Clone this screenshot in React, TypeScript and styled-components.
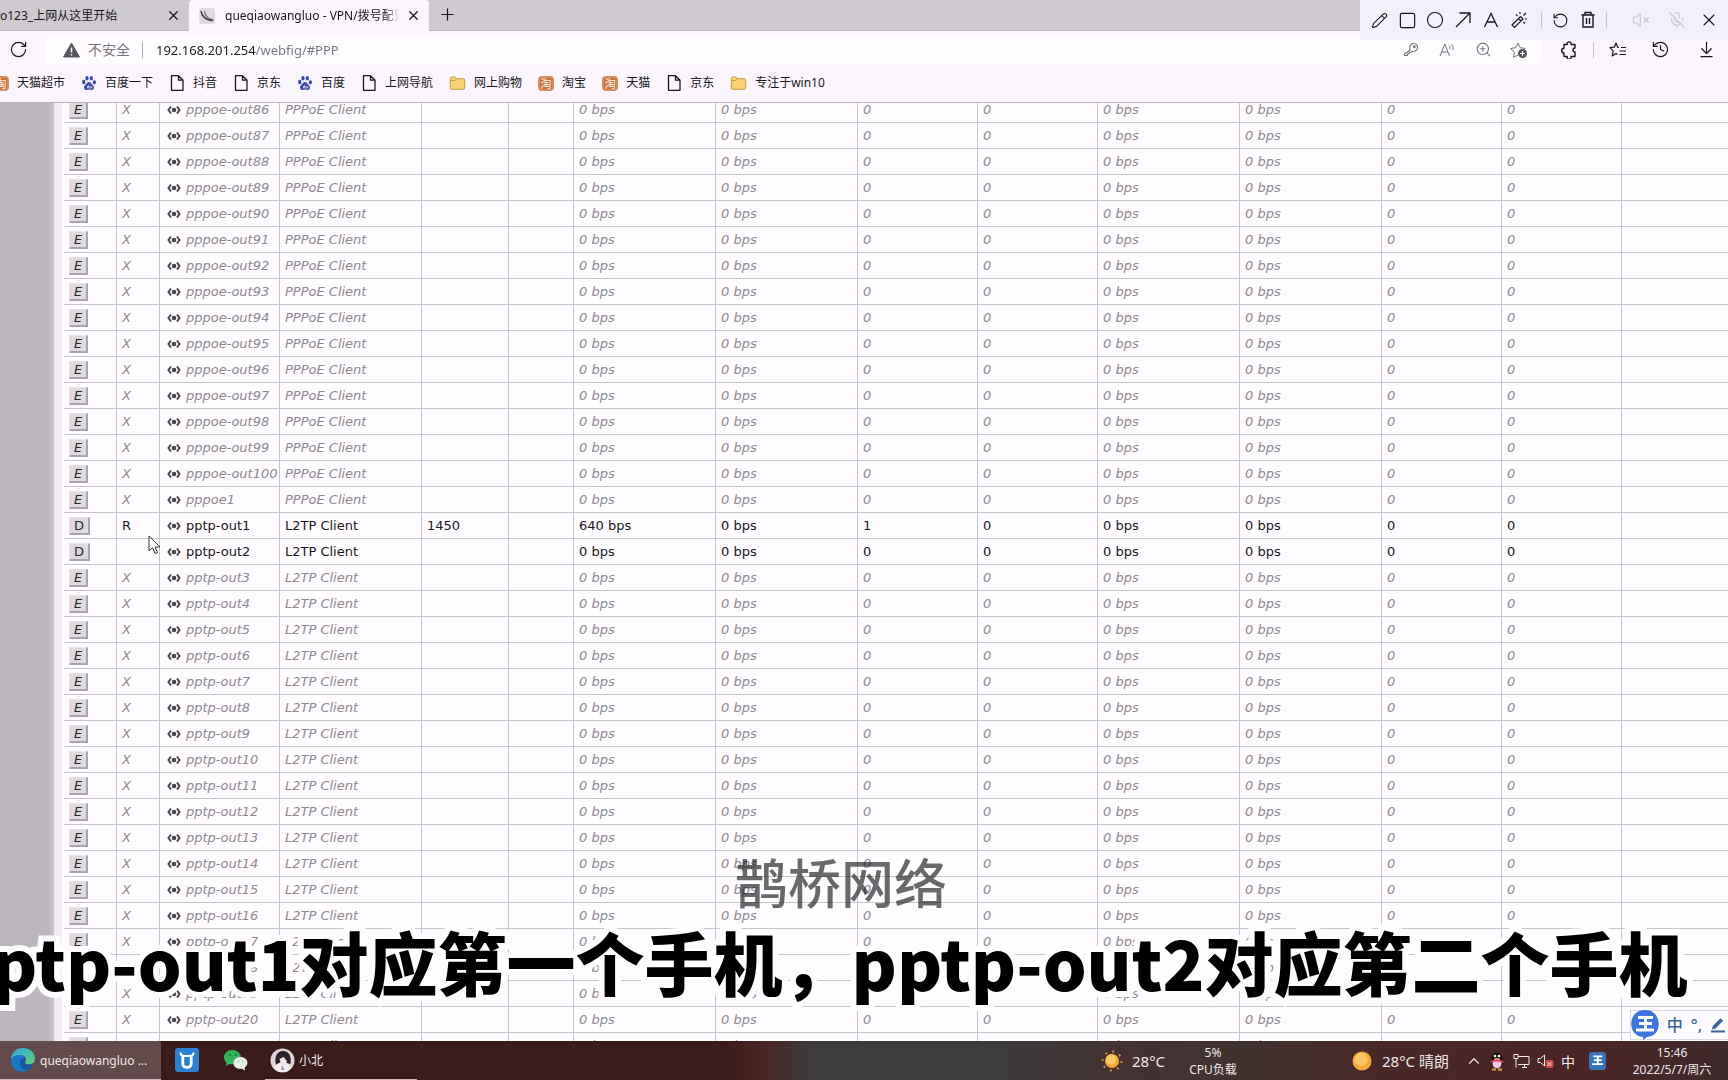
import React from 'react';
import styled, { createGlobalStyle, css } from 'styled-components';
import {
  Pencil, Square, Circle, RotateCcw, Trash2, VolumeX, MicOff, X, Plus, RotateCw,
  ZoomIn, History, ArrowDownToLine, ChevronUp,
} from 'lucide-react';

const Global = createGlobalStyle`
  * { box-sizing: border-box; }
  html, body, #root { height: 100%; }
  body {
    margin: 0;
    overflow: hidden;
    color: #19171b;
    font-family: "Noto Sans", "Noto Sans CJK SC", sans-serif;
    font-size: 12px;
  }
  button { font: inherit; color: inherit; padding: 0; border: 0; background: none; }
  a { color: inherit; text-decoration: none; }
`;

const Screen = styled.div`
  position: relative;
  display: flex;
  flex-direction: column;
  height: 100vh;
  overflow: hidden;
  background: #fefcff;
`;

/* ---------- browser chrome ---------- */

const TabStrip = styled.div`
  display: flex;
  flex: none;
  height: 31px;
  background: #cfcacf;
  border-bottom: 1px solid #bdb8bf;
`;

const Tab = styled.div<{ $active?: boolean }>`
  display: flex;
  align-items: center;
  height: 31px;
  width: ${p => (p.$active ? 240 : 189)}px;
  padding: 0 8px 0 ${p => (p.$active ? 10 : 0)}px;
  border-radius: 4px 4px 0 0;
  background: ${p => (p.$active ? '#fbf5fd' : 'transparent')};
`;

const TabTitle = styled.span<{ $fade?: boolean }>`
  flex: 1;
  min-width: 0;
  margin-right: 6px;
  overflow: hidden;
  white-space: nowrap;
  line-height: 20px;
  ${p => p.$fade && css`mask-image: linear-gradient(90deg, #000 92%, transparent);`}
`;

const IconButton = styled.button<{ $w?: number; $tone?: string }>`
  display: flex;
  flex: none;
  align-items: center;
  justify-content: center;
  width: ${p => p.$w ?? 16}px;
  height: 28px;
  color: ${p => p.$tone ?? '#19171b'};
`;

const Favicon = styled.span`
  display: flex;
  flex: none;
  width: 16px;
  height: 16px;
  margin-right: 10px;
`;

const Toolbar = styled.div`
  display: flex;
  flex: none;
  align-items: center;
  height: 37px;
  padding-right: 8px;
  background: #fbf5fd;
`;

const AddressBar = styled.label`
  display: flex;
  flex: 1;
  align-items: center;
  height: 30px;
  margin-left: 10px;
  padding: 0 12px 0 17px;
  border-radius: 3px;
  background: #fefcff;
  color: #77737a;
  font-size: 14px;
`;

const Insecure = styled.span`
  padding: 0 12px 0 8px;
  margin-right: 13px;
  border-right: 1px solid #b5b0b8;
  line-height: 16px;
  white-space: nowrap;
`;

const AddressInput = styled.input`
  flex: 1;
  min-width: 0;
  height: 24px;
  padding: 0;
  border: 0;
  outline: 0;
  font: inherit;
  font-size: 13px;
  background: linear-gradient(90deg, #1d1b1f 100px, #77737a 100px);
  background-clip: text;
  -webkit-text-fill-color: transparent;
`;

const ToolGroup = styled.div<{ $gap: number; $end?: number }>`
  display: flex;
  flex: none;
  align-items: center;
  gap: ${p => p.$gap}px;
  padding-right: ${p => p.$end ?? 0}px;
`;

const Divider = styled.span`
  width: 1px;
  height: 16px;
  background: #c6c0cb;
`;

const BookmarkRow = styled.div`
  flex: none;
  background: #fbf5fd;
  border-bottom: 1px solid #b9b4bb;
`;

const Bookmarks = styled.nav`
  display: flex;
  align-items: center;
  gap: 16px;
  height: 34px;
  margin-left: -7px;
  padding-bottom: 4px;
  line-height: 16px;
  white-space: nowrap;
`;

const Bookmark = styled.a`
  display: flex;
  align-items: center;
  gap: 8px;
`;

const TaoBadge = styled.span`
  display: grid;
  place-items: center;
  width: 16px;
  height: 15px;
  border: 2px solid #d98a5c;
  border-radius: 4px;
  background: #c9713f;
  color: #fff3ea;
  font-size: 11px;
  line-height: 11px;
`;

/* ---------- interface list ---------- */

const Page = styled.main`
  display: flex;
  flex: 1;
  min-height: 0;
  overflow: hidden;
`;

const Gutter = styled.div`
  flex: none;
  width: 64px;
  background: linear-gradient(90deg, #bcb7bd 48px, #c8c3ca 54px, #efeaf2 54px, #f3eef6 62px, #fefcff 62px);
`;

const Table = styled.table`
  flex: 1;
  align-self: flex-start;
  width: 100%;
  margin-top: -6px;
  table-layout: fixed;
  border-collapse: separate;
  border-spacing: 0;
  font-family: "DejaVu Sans", sans-serif;
  font-size: 13px;
`;

const Col = styled.col<{ $w?: number }>`
  ${p => p.$w && css`width: ${p.$w}px;`}
`;

const Row = styled.tr<{ $off: boolean }>`
  color: ${p => (p.$off ? '#8e898f' : '#19171b')};
  font-style: ${p => (p.$off ? 'italic' : 'normal')};
`;

const Cell = styled.td`
  height: 26px;
  padding: 0 0 0 5px;
  border: solid #c9c4cb;
  border-width: 0 1px 1px 0;
  line-height: 16px;
  white-space: nowrap;
  overflow: hidden;
  &:last-child { border-right: 0; }
`;

const Toggle = styled.button`
  display: block;
  height: 18px;
  padding: 0 4px;
  border: 1px solid #e6e2e8;
  border-right: 2px solid #a9a4ac;
  border-bottom: 2px solid #a9a4ac;
  background: #dedae0;
  color: #2a272c;
  font-style: inherit;
  line-height: 15px;
`;

const Name = styled.span`
  display: flex;
  align-items: center;
  gap: 5px;
  padding-left: 2px;
`;

type Iface = { name: string; type: string; flag: string; mtu?: string; tx?: string; pkt?: string };

const rows: Iface[] = [
  ...Array.from({ length: 15 }, (_, i) => ({ name: `pppoe-out${86 + i}`, type: 'PPPoE Client', flag: 'X' })),
  { name: 'pppoe1', type: 'PPPoE Client', flag: 'X' },
  { name: 'pptp-out1', type: 'L2TP Client', flag: 'R', mtu: '1450', tx: '640 bps', pkt: '1' },
  { name: 'pptp-out2', type: 'L2TP Client', flag: '' },
  ...Array.from({ length: 19 }, (_, i) => ({ name: `pptp-out${3 + i}`, type: 'L2TP Client', flag: 'X' })),
];

const columns = [53, 43, 120, 142, 87, 65, 142, 142, 120, 120, 142, 142, 120, 120, undefined];

const LinkIcon = () => (
  <svg width="14" height="10" viewBox="0 0 14 10" fill="none" stroke="#4a464d" strokeWidth="2">
    <path d="M4 1.500 1.500 5 4 8.500M10 1.500 12.500 5 10 8.500" />
    <circle cx="7" cy="5" r="2.300" fill="#4a464d" stroke="none" />
  </svg>
);

/* ---------- overlays ---------- */

const MarkupBar = styled.div`
  position: absolute;
  top: 0;
  right: 0;
  display: flex;
  align-items: center;
  gap: 8px;
  height: 40px;
  padding: 0 9px;
  background: #f3effd;
`;

const Spacer = styled.span`
  width: 4px;
`;

const Pointer = styled.svg`
  position: absolute;
  left: 148px;
  top: 535px;
`;

const Watermark = styled.div`
  position: absolute;
  left: 735px;
  top: 853px;
  color: rgba(30, 27, 32, 0.66);
  font-family: "Noto Sans CJK SC", sans-serif;
  font-size: 53px;
  font-weight: 500;
  line-height: 56px;
  white-space: nowrap;
`;

const Caption = styled.div`
  position: absolute;
  left: -8px;
  top: 911px;
  color: #000;
  font-family: "Noto Sans CJK SC", sans-serif;
  font-size: 69px;
  font-weight: 900;
  line-height: 100px;
  white-space: nowrap;
  -webkit-text-stroke: 12px #fefcff;
  paint-order: stroke fill;
`;

const ImeBar = styled.div`
  position: absolute;
  right: 0;
  bottom: 40px;
  display: flex;
  align-items: center;
  gap: 8px;
  height: 30px;
  padding-right: 2px;
  border: 1px solid #dcd6e0;
  border-right: 0;
  background: #fefcff;
  color: #356496;
  font-size: 16px;
  font-weight: 500;
  line-height: 20px;
`;

/* ---------- taskbar ---------- */

const Taskbar = styled.footer`
  display: flex;
  flex: none;
  align-items: stretch;
  height: 39px;
  color: #f0e8ea;
  font-size: 14px;
  background: linear-gradient(90deg, #3a1c1a 0, #3c1c1a 42%, #4a2321 44%, #3d3b3c 47%, #3d3b3c 58%, #443131 65%, #40322f 72%, #4a2727 80%, #4b2526 92%, #402a2b 100%);
`;

const Task = styled.button<{ $w: number; $pad?: number; $active?: boolean; $line?: boolean }>`
  display: flex;
  align-items: center;
  gap: 4px;
  width: ${p => p.$w}px;
  padding-left: ${p => p.$pad ?? 5}px;
  white-space: nowrap;
  font-size: 12px;
  background: ${p => (p.$active ? '#644b4b' : 'transparent')};
  border-bottom: 1px solid ${p => (p.$line || p.$active ? '#cdb4b6' : 'transparent')};
`;

const Tray = styled.div`
  display: flex;
  align-items: center;
  margin-left: auto;
  padding-right: 14px;
`;

const TrayItem = styled.button<{ $w: number }>`
  display: flex;
  flex: none;
  align-items: center;
  gap: 9px;
  width: ${p => p.$w}px;
  white-space: nowrap;
`;

const Weather = styled(TrayItem)`
  font-size: 15px;
`;

const Stack = styled.div<{ $w: number }>`
  width: ${p => p.$w}px;
  font-size: 12px;
  line-height: 17px;
  text-align: center;
  white-space: nowrap;
`;

/* ---------- drawings ---------- */

const Paw = () => (
  <svg width="16" height="16" viewBox="0 0 16 16" fill="#3b49a8">
    <ellipse cx="2.800" cy="7" rx="1.700" ry="2.200" /><ellipse cx="6" cy="3.300" rx="1.600" ry="2.300" />
    <ellipse cx="10.300" cy="3.300" rx="1.600" ry="2.300" /><ellipse cx="13.400" cy="7.300" rx="1.600" ry="2.100" />
    <path d="M8 7c2 0 2.600 2 4 3.300 1.800 1.700 1 4.700-1.300 4.700-1 0-1.700-.4-2.700-.4s-1.700.4-2.700.4C3 15 2.200 12 4 10.300 5.400 9 6 7 8 7Z" />
    <path d="M6.500 11v2h1.200v-3M9 11v2h1.800v-2" stroke="#dfe2fa" strokeWidth=".8" fill="none" />
  </svg>
);

const Folder = () => (
  <svg width="17" height="16" viewBox="0 0 16 16">
    <path d="M.8 3.500C.8 2.600 1.300 2 2.100 2h3.500l1.700 1.700h6.500c.8 0 1.400.5 1.400 1.300v8c0 .8-.5 1.300-1.300 1.300H2.100C1.300 14.300.8 13.800.8 13Z" fill="#f8d272" stroke="#c59a48" />
    <path d="M1 5.500h4.300L7.200 4" fill="none" stroke="#c59a48" />
  </svg>
);

const Doc = () => (
  <svg width="16" height="16" viewBox="0 0 16 16" fill="none" stroke="#19171b" strokeWidth="1.300" strokeLinejoin="round">
    <path d="M2.500.7H9.500l4.500 4.500v10.100H2.500ZM9.500.7v4.500H14" />
  </svg>
);

const Tao = () => <TaoBadge>淘</TaoBadge>;

const bookmarks: [React.FC, string][] = [
  [Tao, '天猫超市'], [Paw, '百度一下'], [Doc, '抖音'], [Doc, '京东'], [Paw, '百度'], [Doc, '上网导航'],
  [Folder, '网上购物'], [Tao, '淘宝'], [Tao, '天猫'], [Doc, '京东'], [Folder, '专注于win10'],
];

const Warning = () => (
  <svg width="17" height="16" viewBox="0 0 17 16">
    <path d="M8.500 1 16.500 15H.5Z" fill="#5b575e" stroke="#5b575e" strokeLinejoin="round" />
    <path d="M8.500 5.500v5M8.500 12v1.500" stroke="#fefcff" strokeWidth="1.500" />
  </svg>
);

const KeyIcon = () => (
  <svg width="16" height="16" viewBox="0 0 16 16" fill="none" stroke="#77737a" strokeWidth="1.100" strokeLinejoin="round">
    <path d="M7 8.300C5.800 5 7.500 1.500 10.500 1.500c2.500 0 4 1.700 4 4 0 3-3 4.500-5.500 3.700L7.500 10.500H6V12H4.500v1.500H1.500V12Z" />
    <circle cx="11.300" cy="4.700" r=".9" />
  </svg>
);

const StarPlus = () => (
  <svg width="20" height="18" viewBox="0 0 20 18" fill="none" stroke="#77737a">
    <path d="M9 14l-4.500 2.400.9-5.200L1.500 7.500l5.200-.8L9 2l2.300 4.700 5.200.8" strokeLinejoin="round" />
    <circle cx="13.500" cy="12.500" r="4.500" fill="#57535a" stroke="none" />
    <path d="M11 12.500h5M13.500 10v5" stroke="#fefcff" />
  </svg>
);

const PuzzleIcon = () => (
  <svg width="18" height="18" viewBox="0 0 18 18" fill="none" stroke="#19171b" strokeWidth="1.400" strokeLinejoin="round">
    <path d="M4 3.500h3.200a2 2 0 1 1 3.800 0h4V7a2 2 0 1 0 0 4v4.500h-4a2 2 0 1 1-3.800 0H4V12A2.300 2.300 0 1 1 4 7.200Z" />
  </svg>
);

const StarList = () => (
  <svg width="18" height="18" viewBox="0 0 18 18" fill="none" stroke="#19171b" strokeWidth="1.200" strokeLinejoin="round">
    <path d="M10 6.500H8.800L7 2 5.300 6.200l-4.300.5 3.200 3.200-.9 5L7 12.500l1.500 1M12 6.500h5M10.500 10H17M10.500 13.500H17" />
  </svg>
);

const ReadAloud = () => (
  <svg width="17" height="16" viewBox="0 0 17 16" fill="none" stroke="#77737a">
    <path d="M1 14 5.800 2 10.500 14M2.700 10h6.200M10 3.500c1 1 1.200 2.500.8 3.500M12.500 2c1.800 2 2 4 1.200 6" />
  </svg>
);

const ArrowTool = () => (
  <svg width="16" height="16" viewBox="0 0 16 16" fill="none" stroke="currentColor" strokeWidth="1.300">
    <path d="M1 15 15 1M4.500 1H15v10" />
  </svg>
);

const TextTool = () => (
  <svg width="16" height="16" viewBox="0 0 16 16" fill="none" stroke="currentColor" strokeWidth="1.300">
    <path d="M1.500 15 8 1.500 14.500 15M4 10h8" />
  </svg>
);

const MagicPen = () => (
  <svg width="18" height="18" viewBox="0 0 18 18" fill="none" stroke="currentColor" strokeWidth="1.200">
    <path d="M2 14 10.500 5.500l2.500 2.500L4.500 16.500ZM8.500 7.500 11 10M6 3.500l1.500 1.500M10 1v2M13.500 4.500 16 2M15 8h2M13.500 11l1.500 1.500" />
  </svg>
);

const TrashIcon = () => (
  <svg width="16" height="18" viewBox="0 0 16 18" fill="none" stroke="currentColor" strokeWidth="1.400">
    <path d="M1.500 4h13M5 4V1.500h6V4M3 4v12h10V4M6.500 7v6M9.500 7v6" />
  </svg>
);

const Fin = () => (
  <svg width="16" height="16" viewBox="0 0 16 16">
    <rect width="16" height="16" rx="3" fill="#dedade" />
    <path d="M2 3c.5 5 5 9.500 12 9.500" fill="none" stroke="#403c42" strokeWidth="1.600" />
    <path d="M5.500 3c.5 4.500 4 8 9 9" fill="none" stroke="#6d6970" strokeWidth="1.200" />
  </svg>
);

const Sun = ({ plain }: { plain?: boolean }) => (
  <svg width="22" height="22" viewBox="0 0 22 22">
    {!plain && <circle cx="11" cy="11" r="9.500" fill="none" stroke="#d98e2d" strokeWidth="2" strokeDasharray="2 5.460" />}
    <circle cx="11" cy="11" r={plain ? 9.5 : 7} fill="#f5a93a" />
    <circle cx="10" cy="9.500" r={plain ? 6.5 : 5} fill="#fbc766" />
  </svg>
);

const Edge = () => (
  <svg width="26" height="26" viewBox="0 0 26 26">
    <defs>
      <linearGradient id="edgeTop" x1="0" y1="0" x2="1" y2="1">
        <stop offset="0" stopColor="#2fa9dc" /><stop offset="1" stopColor="#5fd07e" />
      </linearGradient>
    </defs>
    <path d="M1 13C1 5.500 6.500 1 13 1s12 4.500 12 10.500c0 4-3 6-6 6-2.500 0-4-1-4-2 0-.8 1-1.200 1-3.200C16 10 13.500 8 10 8c-4.500 0-8 3-9 5Z" fill="url(#edgeTop)" />
    <path d="M1 13c1-3 4.500-5 9-5 3 0 5 1.500 5.700 3-3.700-.5-5.700 2-5.700 5 0 4.500 4 7 8 7-7 4.500-17 0-17-10Z" fill="#1b78c8" />
    <path d="M10 16c0-2.500 1.500-4.500 4-5 1.500 1.500 1 3.200 1 4.500 0 1 1.500 2 4 2 2 0 3.500-.7 4.700-1.500-1 3.500-3 5.700-5.700 7-4 0-8-2.500-8-7Z" fill="#1258a2" />
  </svg>
);

const BlueApp = () => (
  <svg width="24" height="24" viewBox="0 0 24 24">
    <rect width="24" height="24" rx="3" fill="#2d7fd0" />
    <path d="M5.500 4.500c0 2.500 1.500 3.500 4 3.500h5c2.500 0 4-1 4-3.500" fill="none" stroke="#fff" strokeWidth="2" />
    <path d="M7.800 8v8c0 4.500 8.400 4.500 8.400 0V8" fill="none" stroke="#fff" strokeWidth="2.800" />
  </svg>
);

const WeChat = () => (
  <svg width="26" height="24" viewBox="0 0 26 24">
    <path d="M9.500 2C4 2 1 5.500 1 9.500c0 2.500 1.200 4 2.500 5.200L3 18l3.500-2c8 1.500 12-3 11.500-7C17.500 5 14 2 9.500 2Z" fill="#35b35a" />
    <path d="M17.500 9c-4.500 0-7 3-7 6 0 4 4 6.500 8.500 5.800L22 22.500l-.3-3C27 15.500 24 9 17.500 9Z" fill="#e9f2ea" />
    <path d="M6.500 7h1.500M12 7h1.500" stroke="#1c6e38" strokeWidth="2" /><path d="M15 13.500h1.500M19 13.500h1.500" stroke="#7d9" strokeWidth="1.500" />
  </svg>
);

const Avatar = () => (
  <svg width="25" height="25" viewBox="0 0 25 25">
    <circle cx="12.500" cy="12.500" r="12" fill="#ddd3d8" />
    <path d="M6 17C4 9 7 3 13 3c7 0 8.500 7 7.500 13l-3.500-1-3-3-5 3Z" fill="#2b2228" />
    <path d="M9.500 11l4-2 3.500 4-2 3.500-4-.5Z" fill="#f6e4e2" />
    <path d="M3 19l6-4 4 2 5-1 3 4c-4 5-14 6-18-1Z" fill="#f5f0f5" />
    <path d="M12 17l3 5h-4Z" fill="#a997ae" />
  </svg>
);

const Penguin = () => (
  <svg width="16" height="20" viewBox="0 0 16 20">
    <ellipse cx="8" cy="10" rx="6" ry="8.500" fill="#171216" /><ellipse cx="8" cy="12.500" rx="4.500" ry="5" fill="#f2c4e2" />
    <circle cx="6" cy="5" r="1.300" fill="#fff" /><circle cx="10" cy="5" r="1.300" fill="#fff" />
    <path d="M5.500 8h5" stroke="#f0a23c" strokeWidth="1.500" /><path d="M2 11c4-2 8-2 12 0" stroke="#e23d6a" strokeWidth="2" fill="none" />
    <path d="M3 18.500h4M9 18.500h4" stroke="#f0a23c" strokeWidth="2" />
  </svg>
);

const Network = () => (
  <svg width="17" height="16" viewBox="0 0 17 16" fill="none" stroke="#f0e8ea">
    <path d="M5 3.500h11v8H5M9 14.500h5M11.500 11.500v3M1 1.500h4v4H1ZM3 5.500v9" />
  </svg>
);

const Muted = () => (
  <svg width="17" height="16" viewBox="0 0 17 16" fill="none" stroke="#f0e8ea">
    <path d="M1 5.500h2.500L7.500 2v11L3.500 9.500H1Z" />
    <rect x="8.500" y="7" width="8" height="8" rx="2" fill="#d54848" stroke="none" /><path d="m10.500 9 4 4m0-4-4 4" />
  </svg>
);

const ImeLogo = ({ small }: { small?: boolean }) => (
  <svg width={small ? 17 : 28} height={small ? 20 : 30} viewBox="0 0 28 30">
    {small ? <rect width="28" height="30" rx="5" fill="#3773b8" /> : <path d="M14 0c18 0 18 27 2 27l-4 3v-3C-4 26-4 0 14 0Z" fill="#3c76dc" />}
    <path d="M7 7.500h15M8 13.500h13M5 20h18M14.500 7.500V20" stroke="#fff" strokeWidth="3" />
  </svg>
);

const ImePen = () => (
  <svg width="16" height="16" viewBox="0 0 16 16">
    <path d="M2 12.500l.8-3.500L10.500 1.200l2.600 2.600L5.500 11.600ZM1 13.500h14v2H1Z" fill="#356496" />
  </svg>
);

export default function App() {
  return (
    <>
      <Global />
      <Screen>
        <TabStrip role="tablist">
          <Tab role="tab">
            <TabTitle>o123_上网从这里开始</TabTitle>
            <IconButton aria-label="关闭"><X size={15} /></IconButton>
          </Tab>
          <Tab role="tab" aria-selected $active>
            <Favicon><Fin /></Favicon>
            <TabTitle $fade>queqiaowangluo - VPN/拨号配置</TabTitle>
            <IconButton aria-label="关闭"><X size={15} /></IconButton>
          </Tab>
          <IconButton aria-label="新建标签页" $w={36}><Plus size={19} strokeWidth={1.5} /></IconButton>
        </TabStrip>

        <Toolbar>
          <IconButton aria-label="刷新" $w={36}><RotateCw size={19} strokeWidth={1.5} /></IconButton>
          <AddressBar>
            <Warning />
            <Insecure>不安全</Insecure>
            <AddressInput aria-label="地址" defaultValue="192.168.201.254/webfig/#PPP" />
            <ToolGroup $gap={16}>
              <IconButton aria-label="密码" $w={20}><KeyIcon /></IconButton>
              <IconButton aria-label="朗读" $w={20}><ReadAloud /></IconButton>
              <IconButton aria-label="缩放" $w={20} $tone="#77737a"><ZoomIn size={17} strokeWidth={1.5} /></IconButton>
              <IconButton aria-label="收藏" $w={20}><StarPlus /></IconButton>
            </ToolGroup>
          </AddressBar>
          <ToolGroup $gap={14}>
            <Spacer />
            <IconButton aria-label="扩展" $w={20}><PuzzleIcon /></IconButton>
            <Divider />
            <IconButton aria-label="收藏夹" $w={20}><StarList /></IconButton>
            <IconButton aria-label="历史记录" $w={36}><History size={19} strokeWidth={1.5} /></IconButton>
            <IconButton aria-label="下载" $w={28}><ArrowDownToLine size={19} strokeWidth={1.5} /></IconButton>
          </ToolGroup>
        </Toolbar>

        <BookmarkRow>
          <Bookmarks>
            {bookmarks.map(([Icon, label], i) => (
              <Bookmark key={i} href="#"><Icon />{label}</Bookmark>
            ))}
          </Bookmarks>
        </BookmarkRow>

        <Page>
          <Gutter />
          <Table>
            <colgroup>{columns.map((w, i) => <Col key={i} $w={w} />)}</colgroup>
            <tbody>
              {rows.map(r => {
                const off = r.flag === 'X';
                return (
                  <Row key={r.name} $off={off}>
                    <Cell><Toggle>{off ? 'E' : 'D'}</Toggle></Cell>
                    <Cell>{r.flag}</Cell>
                    <Cell><Name><LinkIcon />{r.name}</Name></Cell>
                    <Cell>{r.type}</Cell>
                    <Cell>{r.mtu}</Cell>
                    <Cell />
                    <Cell>{r.tx ?? '0 bps'}</Cell>
                    <Cell>0 bps</Cell>
                    <Cell>{r.pkt ?? '0'}</Cell>
                    <Cell>0</Cell>
                    <Cell>0 bps</Cell>
                    <Cell>0 bps</Cell>
                    <Cell>0</Cell>
                    <Cell>0</Cell>
                    <Cell />
                  </Row>
                );
              })}
            </tbody>
          </Table>
        </Page>

        <Taskbar>
          <Task $w={161} $pad={10} $active><Edge />queqiaowangluo ...</Task>
          <Task $w={57} $pad={14} aria-label="应用"><BlueApp /></Task>
          <Task $w={47} aria-label="微信"><WeChat /></Task>
          <Task $w={152} $line><Avatar />小北</Task>
          <Tray>
            <Weather $w={75}><Sun />28°C</Weather>
            <Stack $w={74}>5%<br />CPU负载</Stack>
            <Stack $w={101} />
            <Weather $w={114}><Sun plain />28°C 晴朗</Weather>
            <TrayItem $w={24} aria-label="更多"><ChevronUp size={18} strokeWidth={1.5} /></TrayItem>
            <TrayItem $w={24} aria-label="QQ"><Penguin /></TrayItem>
            <TrayItem $w={24} aria-label="网络"><Network /></TrayItem>
            <TrayItem $w={24} aria-label="音量"><Muted /></TrayItem>
            <TrayItem $w={28}>中</TrayItem>
            <TrayItem $w={41} aria-label="输入法"><ImeLogo small /></TrayItem>
            <Stack $w={84}>15:46<br />2022/5/7/周六</Stack>
          </Tray>
        </Taskbar>

        <MarkupBar>
          <ToolGroup $gap={8} $end={4}>
            <IconButton aria-label="画笔" $w={20}><Pencil size={17} strokeWidth={1.5} /></IconButton>
            <IconButton aria-label="矩形" $w={20}><Square size={19} strokeWidth={1.5} /></IconButton>
            <IconButton aria-label="椭圆" $w={20}><Circle size={18} strokeWidth={1.5} /></IconButton>
            <IconButton aria-label="箭头" $w={20}><ArrowTool /></IconButton>
            <IconButton aria-label="文字" $w={20}><TextTool /></IconButton>
            <IconButton aria-label="荧光笔" $w={20}><MagicPen /></IconButton>
          </ToolGroup>
          <Divider />
          <IconButton aria-label="撤销" $w={20}><RotateCcw size={17} strokeWidth={1.5} /></IconButton>
          <IconButton aria-label="删除" $w={20}><TrashIcon /></IconButton>
          <Divider />
          <Spacer />
          <IconButton aria-label="静音" $w={28} $tone="#cbc6d3"><VolumeX size={18} strokeWidth={1.5} /></IconButton>
          <IconButton aria-label="关闭麦克风" $w={28} $tone="#cbc6d3"><MicOff size={18} strokeWidth={1.5} /></IconButton>
          <IconButton aria-label="关闭" $w={20}><X size={22} strokeWidth={1.3} /></IconButton>
        </MarkupBar>

        <Pointer width="14" height="20" viewBox="0 0 14 20">
          <path d="M1 1v15l3.500-3.500L7 18.500l2.500-1L7 12h5Z" fill="#fff" stroke="#3a363d" />
        </Pointer>

        <Watermark>鹊桥网络</Watermark>
        <Caption>ptp-out1对应第一个手机，pptp-out2对应第二个手机</Caption>

        <ImeBar>
          <ImeLogo />
          <span>中</span>
          <span>°,</span>
          <ImePen />
        </ImeBar>
      </Screen>
    </>
  );
}
